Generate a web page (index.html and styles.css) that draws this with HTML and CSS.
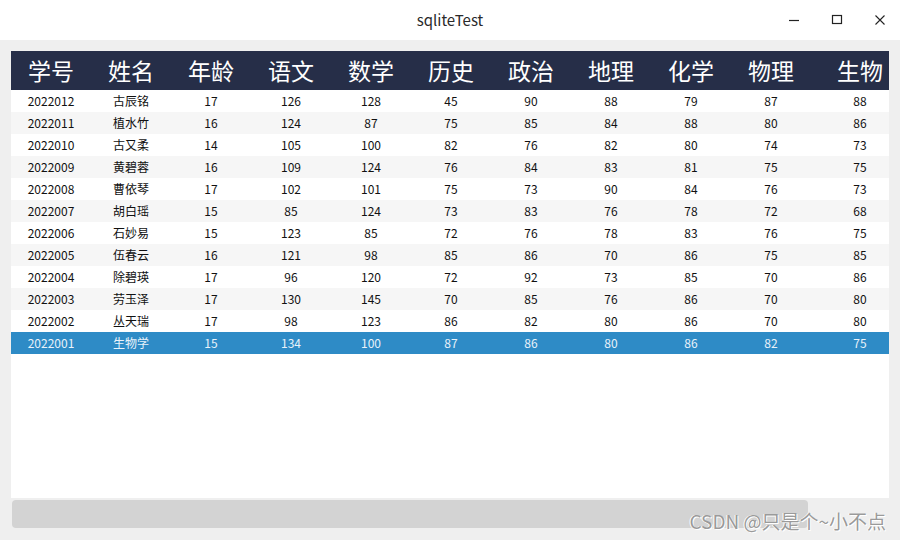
FILE: index.html
```html
<!DOCTYPE html>
<html>
<head>
<meta charset="utf-8">
<link rel="stylesheet" href="styles.css">
</head>
<body>
<div class="window">
  <div class="titlebar">
    <div class="title">sqliteTest</div>
    <div class="controls">
      <span class="ctl"><svg width="12" height="12" viewBox="0 0 12 12"><path d="M1 6.5H11" stroke="#222" stroke-width="1.2"/></svg></span>
      <span class="ctl"><svg width="12" height="12" viewBox="0 0 12 12"><rect x="1.5" y="1.5" width="9" height="8" fill="none" stroke="#222" stroke-width="1.2"/></svg></span>
      <span class="ctl"><svg width="12" height="12" viewBox="0 0 12 12"><path d="M1.5 1.5L10.5 10.5M10.5 1.5L1.5 10.5" stroke="#222" stroke-width="1.1"/></svg></span>
    </div>
  </div>
  <div class="content">
    <div class="panel">
      <div class="grid head">
        <div>学号</div><div>姓名</div><div>年龄</div><div>语文</div><div>数学</div><div>历史</div><div>政治</div><div>地理</div><div>化学</div><div>物理</div><div>生物</div>
      </div>
      <div class="grid row"><div>2022012</div><div>古辰铭</div><div>17</div><div>126</div><div>128</div><div>45</div><div>90</div><div>88</div><div>79</div><div>87</div><div>88</div></div>
      <div class="grid row alt"><div>2022011</div><div>植水竹</div><div>16</div><div>124</div><div>87</div><div>75</div><div>85</div><div>84</div><div>88</div><div>80</div><div>86</div></div>
      <div class="grid row"><div>2022010</div><div>古又柔</div><div>14</div><div>105</div><div>100</div><div>82</div><div>76</div><div>82</div><div>80</div><div>74</div><div>73</div></div>
      <div class="grid row alt"><div>2022009</div><div>黄碧蓉</div><div>16</div><div>109</div><div>124</div><div>76</div><div>84</div><div>83</div><div>81</div><div>75</div><div>75</div></div>
      <div class="grid row"><div>2022008</div><div>曹依琴</div><div>17</div><div>102</div><div>101</div><div>75</div><div>73</div><div>90</div><div>84</div><div>76</div><div>73</div></div>
      <div class="grid row alt"><div>2022007</div><div>胡白瑶</div><div>15</div><div>85</div><div>124</div><div>73</div><div>83</div><div>76</div><div>78</div><div>72</div><div>68</div></div>
      <div class="grid row"><div>2022006</div><div>石妙易</div><div>15</div><div>123</div><div>85</div><div>72</div><div>76</div><div>78</div><div>83</div><div>76</div><div>75</div></div>
      <div class="grid row alt"><div>2022005</div><div>伍春云</div><div>16</div><div>121</div><div>98</div><div>85</div><div>86</div><div>70</div><div>86</div><div>75</div><div>85</div></div>
      <div class="grid row"><div>2022004</div><div>除碧瑛</div><div>17</div><div>96</div><div>120</div><div>72</div><div>92</div><div>73</div><div>85</div><div>70</div><div>86</div></div>
      <div class="grid row alt"><div>2022003</div><div>劳玉泽</div><div>17</div><div>130</div><div>145</div><div>70</div><div>85</div><div>76</div><div>86</div><div>70</div><div>80</div></div>
      <div class="grid row"><div>2022002</div><div>丛天瑞</div><div>17</div><div>98</div><div>123</div><div>86</div><div>82</div><div>80</div><div>86</div><div>70</div><div>80</div></div>
      <div class="grid row sel"><div>2022001</div><div>生物学</div><div>15</div><div>134</div><div>100</div><div>87</div><div>86</div><div>80</div><div>86</div><div>82</div><div>75</div></div>
    </div>
    <div class="scrollbar"><div class="thumb"></div></div>
  </div>
  <div class="watermark">CSDN @只是个~小不点</div>
</div>
</body>
</html>
```
FILE: styles.css
```css
* { box-sizing: border-box; }
html, body { margin: 0; padding: 0; }
body {
  width: 900px;
  height: 540px;
  overflow: hidden;
  background: #efefef;
  font-family: "Noto Sans CJK SC", "Noto Sans", sans-serif;
}
.window {
  position: relative;
  width: 900px;
  height: 540px;
  display: flex;
  flex-direction: column;
}
.titlebar {
  height: 40px;
  background: #ffffff;
  display: flex;
  align-items: center;
  justify-content: center;
  position: relative;
}
.title {
  font-size: 15px;
  color: #2a2a2a;
  line-height: 40px;
}
.controls {
  position: absolute;
  right: 14px;
  top: 0;
  height: 40px;
  display: flex;
  align-items: center;
  gap: 31px;
}
.ctl { display: flex; width: 12px; height: 12px; }
.content {
  padding: 11px 11px 0 11px;
  display: flex;
  flex-direction: column;
}
.panel {
  height: 447px;
  background: #ffffff;
  overflow: hidden;
}
.grid {
  display: grid;
  grid-template-columns: repeat(10, 80px) 98px;
  width: 898px;
}
.grid > div {
  text-align: center;
  white-space: nowrap;
}
.head {
  height: 39px;
  background: #262e48;
  color: #ffffff;
  font-size: 23px;
  line-height: 39px;
}
.row {
  height: 22px;
  line-height: 22px;
  font-size: 12px;
  color: #111111;
  background: #ffffff;
}
.row.alt { background: #f6f6f6; }
.row.sel { background: #2e8bc6; color: #e9f2fa; }
.scrollbar {
  margin-top: 2px;
  height: 28px;
  padding-left: 1px;
}
.thumb {
  width: 796px;
  height: 28px;
  background: #d3d3d3;
  border-radius: 4px;
}
.watermark {
  position: absolute;
  right: 14px;
  bottom: 6px;
  font-size: 19px;
  color: #9a9a9a;
  text-shadow: 1px 1px 0 #ffffff, -1px 0 0 #ffffff;
  white-space: pre;
}
```
